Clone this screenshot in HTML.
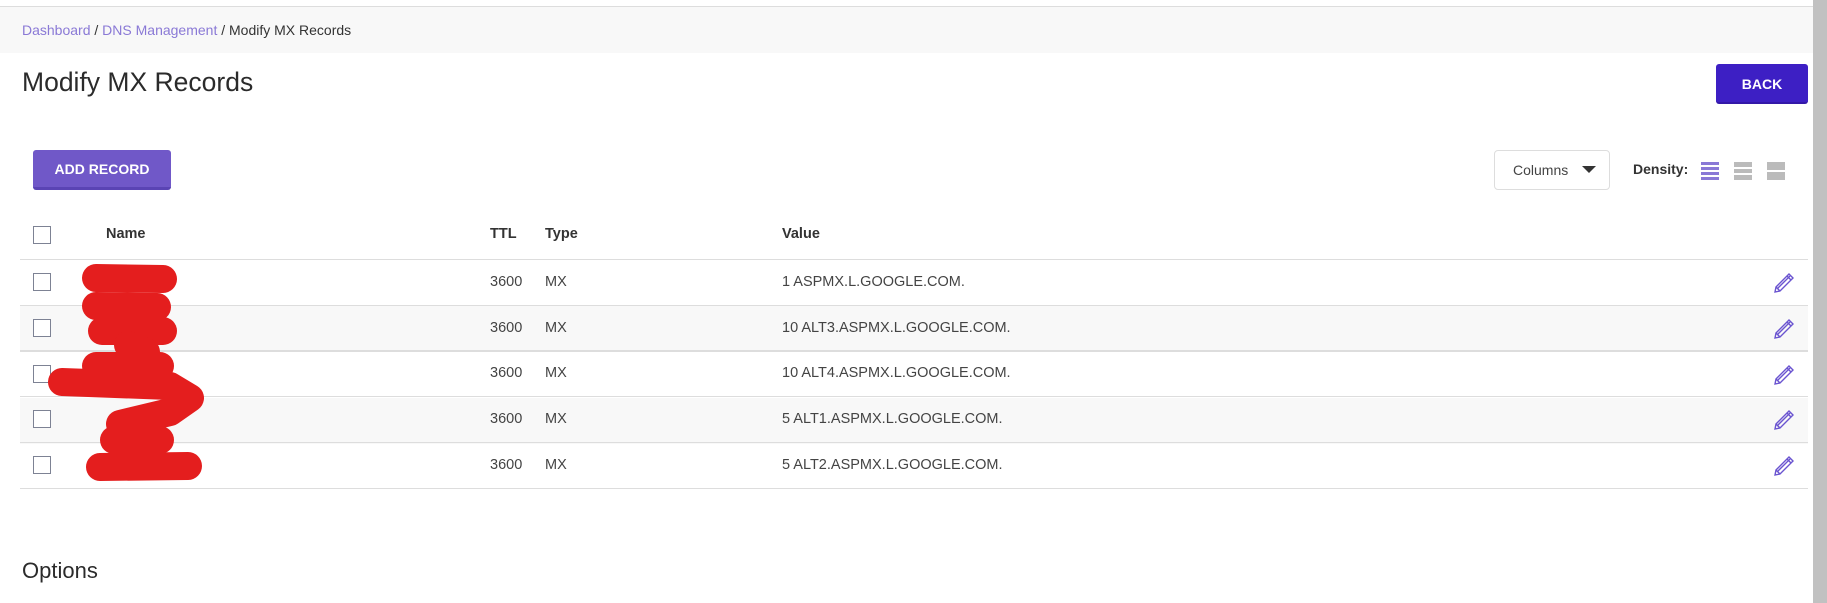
<!DOCTYPE html>
<html><head><meta charset="utf-8"><style>
*{margin:0;padding:0;box-sizing:border-box}
body{width:1827px;height:603px;overflow:hidden;background:#fff;font-family:"Liberation Sans",sans-serif;color:#333;position:relative}
.abs{position:absolute}
.bc{left:0;top:6px;width:1813px;height:47px;background:#f8f8f8;border-top:1px solid #ddd;font-size:14px;line-height:46px;padding-left:22px;color:#333}
.bc a{color:#8a79d6;text-decoration:none}
h1{position:absolute;left:22px;top:67px;font-size:26.5px;font-weight:normal;color:#2b2b2b}
.btn{position:absolute;color:#fff;font-weight:bold;font-size:14px;text-align:center;border-radius:3px}
.cb{position:absolute;left:33px;width:18px;height:18px;border:1px solid #7d8294;background:#fff}
.line{position:absolute;left:20px;width:1788px;height:1px;background:#ddd}
.row{position:absolute;left:20px;width:1788px;height:46px}
.t{position:absolute;font-size:14.5px;color:#444}
.th{position:absolute;font-size:14.5px;font-weight:bold;color:#333;top:226px}
</style></head><body>
<div class="abs bc"><a>Dashboard</a> / <a>DNS Management</a> / Modify MX Records</div>
<h1>Modify MX Records</h1>
<div class="btn" style="left:1716px;top:64px;width:92px;height:40px;line-height:40px;background:#3d1fc4;border-bottom:2px solid #3318a8">BACK</div>
<div class="btn" style="left:33px;top:150px;width:138px;height:40px;line-height:39px;background:#7058c8;border-bottom:3px solid #5a44b4">ADD RECORD</div>
<div class="abs" style="left:1494px;top:150px;width:116px;height:40px;border:1px solid #ddd;border-radius:4px;font-size:14px;line-height:38px;padding-left:18px;color:#444">Columns <span style="display:inline-block;margin-left:10px;width:0;height:0;border-left:7px solid transparent;border-right:7px solid transparent;border-top:7px solid #333;vertical-align:2px"></span></div>
<div class="abs" style="left:1633px;top:161px;font-size:14px;font-weight:bold;color:#333">Density:</div>
<svg class="abs" style="left:1701px;top:162px" width="84" height="18">
<g fill="#8a79d6"><rect x="0" y="0" width="18" height="3"/><rect x="0" y="5" width="18" height="3"/><rect x="0" y="10" width="18" height="3"/><rect x="0" y="15" width="18" height="3"/></g>
<g fill="#bbb"><rect x="33" y="0" width="18" height="5"/><rect x="33" y="7" width="18" height="4"/><rect x="33" y="13" width="18" height="5"/>
<rect x="66" y="0" width="18" height="8"/><rect x="66" y="10" width="18" height="8"/></g></svg>
<div class="cb" style="top:226px"></div>
<div class="th" style="left:106px">Name</div><div class="th" style="left:490px">TTL</div><div class="th" style="left:545px">Type</div><div class="th" style="left:782px">Value</div>
<div class="line" style="top:259px"></div>
<div class="row" style="top:306px;background:#f8f8f8"></div>
<div class="row" style="top:398px;background:#f8f8f8"></div>
<div class="line" style="top:305px"></div>
<div class="line" style="top:350px;height:2px"></div>
<div class="line" style="top:396px"></div>
<div class="line" style="top:442px"></div>
<div class="line" style="top:488px"></div>
<div class="cb" style="top:273px"></div><div class="cb" style="top:319px"></div><div class="cb" style="top:365px"></div><div class="cb" style="top:410px"></div><div class="cb" style="top:456px"></div>
<div class="t" style="left:490px;top:274px">3600</div><div class="t" style="left:545px;top:274px">MX</div><div class="t" style="left:782px;top:274px">1 ASPMX.L.GOOGLE.COM.</div>
<div class="t" style="left:490px;top:320px">3600</div><div class="t" style="left:545px;top:320px">MX</div><div class="t" style="left:782px;top:320px">10 ALT3.ASPMX.L.GOOGLE.COM.</div>
<div class="t" style="left:490px;top:365px">3600</div><div class="t" style="left:545px;top:365px">MX</div><div class="t" style="left:782px;top:365px">10 ALT4.ASPMX.L.GOOGLE.COM.</div>
<div class="t" style="left:490px;top:411px">3600</div><div class="t" style="left:545px;top:411px">MX</div><div class="t" style="left:782px;top:411px">5 ALT1.ASPMX.L.GOOGLE.COM.</div>
<div class="t" style="left:490px;top:457px">3600</div><div class="t" style="left:545px;top:457px">MX</div><div class="t" style="left:782px;top:457px">5 ALT2.ASPMX.L.GOOGLE.COM.</div>
<svg class="abs" style="left:0;top:0" width="300" height="603">
<g stroke="#e41e1e" stroke-width="28" stroke-linecap="round" stroke-linejoin="round" fill="none">
<path d="M96 278 L163 279"/><path d="M96 306 L157 307"/><path d="M102 331 L163 331"/>
<path d="M128 345 L146 352"/><path d="M96 366 L160 366"/>
<path d="M62 382 L170 386 L190 398 L170 412 L120 424"/>
<path d="M114 440 L160 440"/><path d="M100 467 L188 466"/></g></svg>
<svg class="abs" style="left:1772px;top:271px" width="24" height="24"><g fill="none" stroke="#6a54d0" stroke-width="1.4"><path d="M3 21 L4 16 L17 3 L21 7 L8 20 Z"/><path d="M4 16 L8 20 M15 5 L19 9 M6 17 L18 5"/></g></svg>
<svg class="abs" style="left:1772px;top:317px" width="24" height="24"><g fill="none" stroke="#6a54d0" stroke-width="1.4"><path d="M3 21 L4 16 L17 3 L21 7 L8 20 Z"/><path d="M4 16 L8 20 M15 5 L19 9 M6 17 L18 5"/></g></svg>
<svg class="abs" style="left:1772px;top:363px" width="24" height="24"><g fill="none" stroke="#6a54d0" stroke-width="1.4"><path d="M3 21 L4 16 L17 3 L21 7 L8 20 Z"/><path d="M4 16 L8 20 M15 5 L19 9 M6 17 L18 5"/></g></svg>
<svg class="abs" style="left:1772px;top:408px" width="24" height="24"><g fill="none" stroke="#6a54d0" stroke-width="1.4"><path d="M3 21 L4 16 L17 3 L21 7 L8 20 Z"/><path d="M4 16 L8 20 M15 5 L19 9 M6 17 L18 5"/></g></svg>
<svg class="abs" style="left:1772px;top:454px" width="24" height="24"><g fill="none" stroke="#6a54d0" stroke-width="1.4"><path d="M3 21 L4 16 L17 3 L21 7 L8 20 Z"/><path d="M4 16 L8 20 M15 5 L19 9 M6 17 L18 5"/></g></svg>
<div class="abs" style="left:22px;top:558px;font-size:22px;color:#2b2b2b">Options</div>
<div class="abs" style="left:1813px;top:0;width:14px;height:603px;background:#c1c1c1"></div>
</body></html>
